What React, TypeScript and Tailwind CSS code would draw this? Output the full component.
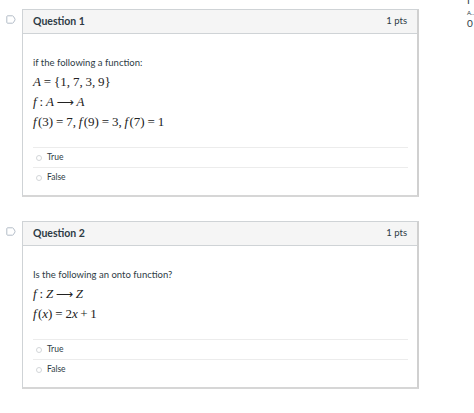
import React from "react";

const Flag = () => (
  <svg width="10" height="9" viewBox="0 0 10 9" className="block">
    <path d="M1.6 0.8 H6.4 Q7 0.8 7.4 1.3 L8.9 3.9 Q9.2 4.5 8.9 5.1 L7.4 7.7 Q7 8.2 6.4 8.2 H1.6 Q0.8 8.2 0.8 7.4 V1.6 Q0.8 0.8 1.6 0.8 Z" fill="none" stroke="#b3bcc7" strokeWidth="1" />
  </svg>
);

const Radio = () => (
  <span className="inline-block w-[6px] h-[6px] rounded-full border border-[#d3d6d9] mr-[5px]" />
);

const MathLine = ({ children }: { children: React.ReactNode }) => (
  <div className="h-[20px] flex items-center text-[13px] text-[#222] font-['Liberation_Serif',serif] whitespace-nowrap">
    <span className="inline-flex items-baseline">{children}</span>
  </div>
);

const V = ({ children }: { children: React.ReactNode }) => (
  <span className="italic">{children}</span>
);
const Rel = ({ children }: { children: React.ReactNode }) => (
  <span className="mx-[0.22em]">{children}</span>
);
const Bin = ({ children }: { children: React.ReactNode }) => (
  <span className="mx-[0.2em]">{children}</span>
);
const Comma = () => <span className="mr-[0.22em]">,</span>;
const Arrow = () => (
  <span className="mx-[0.22em] font-['DejaVu_Sans',sans-serif] text-[12px]">⟶</span>
);

const Answers = () => (
  <div className="mt-[15px]">
    <div className="border-t border-[#ececec] h-[20px] flex items-center pl-[3px] text-[8.5px] text-[#2d3b45]">
      <Radio />
      True
    </div>
    <div className="border-t border-[#ececec] h-[20px] flex items-center pl-[3px] text-[8.5px] text-[#2d3b45]">
      <Radio />
      False
    </div>
  </div>
);

const Card = ({
  title,
  prompt,
  children,
}: {
  title: string;
  prompt: string;
  children: React.ReactNode;
}) => (
  <div className="flex">
    <div className="w-[22px] pt-[6px] pl-[6px]">
      <Flag />
    </div>
    <div className="w-[397px] border border-[#cfd3d6] border-r-2 border-b-2 border-r-[#d0d0d0] border-b-[#d6d6d6] bg-white">
      <div className="h-[23px] bg-[#f5f5f5] border-b border-[#cfd3d6] flex items-center justify-between pl-[10px] pr-[10px] box-content">
        <span className="text-[10.5px] font-bold text-[#2d3b45]">{title}</span>
        <span className="text-[9.5px] text-[#2d3b45]">1 pts</span>
      </div>
      <div className="pt-[22px] pl-[10px] pr-[9px] pb-[8px]">
        <div className="h-[14px] flex items-center text-[9.5px] text-[#2d3b45]">{prompt}</div>
        <div className="mt-[2px]">{children}</div>
        <Answers />
      </div>
    </div>
  </div>
);

export default function App() {
  return (
    <div className="relative w-[474px] h-[413px] bg-white overflow-hidden font-['Lato','Noto_Sans',sans-serif]">
      <div className="pt-[9px] flex flex-col gap-[24px]">
        <Card title="Question 1" prompt="if the following a function:">
          <MathLine>
            <V>A</V>
            <Rel>=</Rel>
            <span>{"{1"}</span>
            <Comma />
            <span>7</span>
            <Comma />
            <span>3</span>
            <Comma />
            <span>{"9}"}</span>
          </MathLine>
          <MathLine>
            <V>f</V>
            <Rel>:</Rel>
            <V>A</V>
            <Arrow />
            <V>A</V>
          </MathLine>
          <MathLine>
            <V>f</V>
            <span className="ml-[0.1em]">(3)</span>
            <Rel>=</Rel>
            <span>7</span>
            <Comma />
            <V>f</V>
            <span className="ml-[0.1em]">(9)</span>
            <Rel>=</Rel>
            <span>3</span>
            <Comma />
            <V>f</V>
            <span className="ml-[0.1em]">(7)</span>
            <Rel>=</Rel>
            <span>1</span>
          </MathLine>
        </Card>
        <Card title="Question 2" prompt="Is the following an onto function?">
          <MathLine>
            <V>f</V>
            <Rel>:</Rel>
            <V>Z</V>
            <Arrow />
            <V>Z</V>
          </MathLine>
          <MathLine>
            <V>f</V>
            <span className="ml-[0.1em]">(</span>
            <V>x</V>
            <span>)</span>
            <Rel>=</Rel>
            <span>2</span>
            <V>x</V>
            <Bin>+</Bin>
            <span>1</span>
          </MathLine>
        </Card>
      </div>
      <div className="absolute left-[467px] top-[-5px] flex flex-col leading-none text-[#2d3b45]">
        <span className="text-[10px] h-[12px]">I</span>
        <span className="text-[6px] h-[10px] pt-[3px]">A..</span>
        <span className="text-[10px] pt-[1px]">0</span>
      </div>
    </div>
  );
}
